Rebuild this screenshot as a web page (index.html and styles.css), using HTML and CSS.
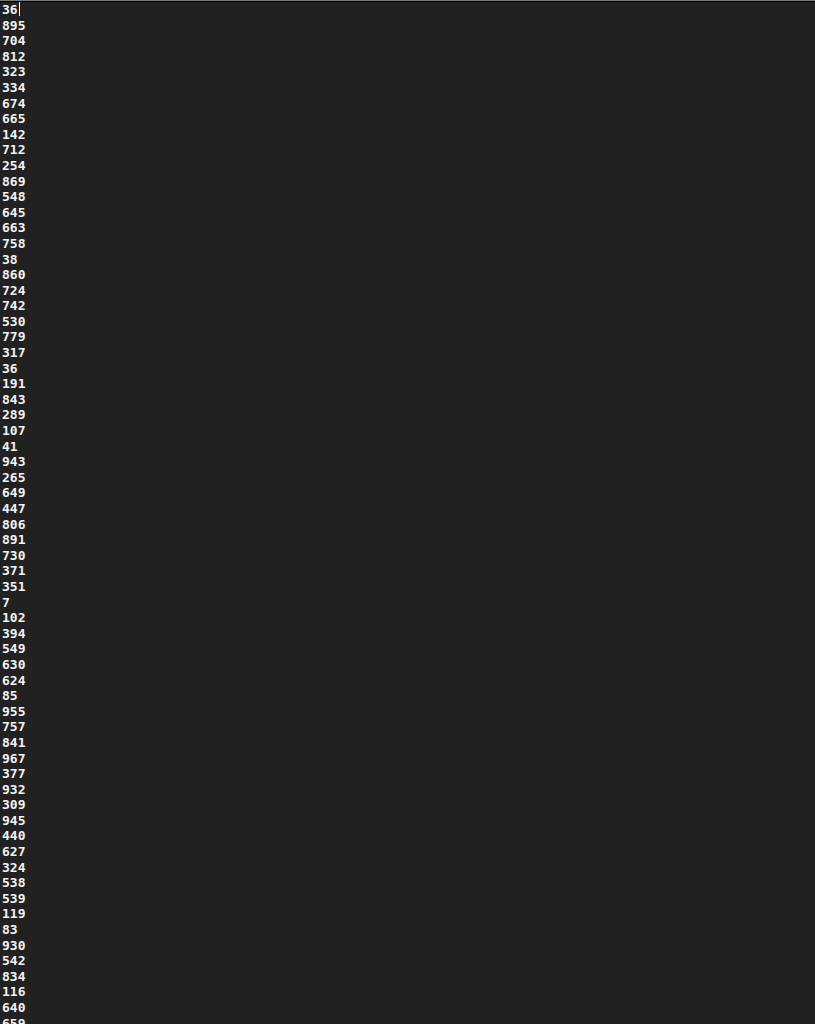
FILE: index.html
```html
<!DOCTYPE html>
<html lang="en">
<head>
    <meta charset="UTF-8">
    <meta name="viewport" content="width=device-width, initial-scale=1.0">
    <title>Numbers</title>
    <link rel="stylesheet" href="styles.css">
</head>
<body>
    <div class="editor">
        <pre class="lines">36<span class="cursor"></span>
895
704
812
323
334
674
665
142
712
254
869
548
645
663
758
38
860
724
742
530
779
317
36
191
843
289
107
41
943
265
649
447
806
891
730
371
351
7
102
394
549
630
624
85
955
757
841
967
377
932
309
945
440
627
324
538
539
119
83
930
542
834
116
640
659
</pre>
    </div>
</body>
</html>
```

FILE: styles.css
```css
html, body {
    margin: 0;
    padding: 0;
    height: 100%;
    background-color: #212121;
    overflow: hidden;
}

.editor {
    height: 100%;
    border-top: 1px solid #7a7a7a;
    box-shadow: inset 0 1px 0 #000;
    background-color: #212121;
}

.lines {
    margin: 0;
    padding: 1px 2px 0;
    font-family: "DejaVu Sans Mono", monospace;
    font-weight: bold;
    font-size: 13px;
    line-height: 15.6px;
    color: #f2f2f2;
}

.cursor {
    display: inline-block;
    width: 1px;
    height: 14px;
    margin-left: 1px;
    vertical-align: -2px;
    background-color: #f2f2f2;
}
```
